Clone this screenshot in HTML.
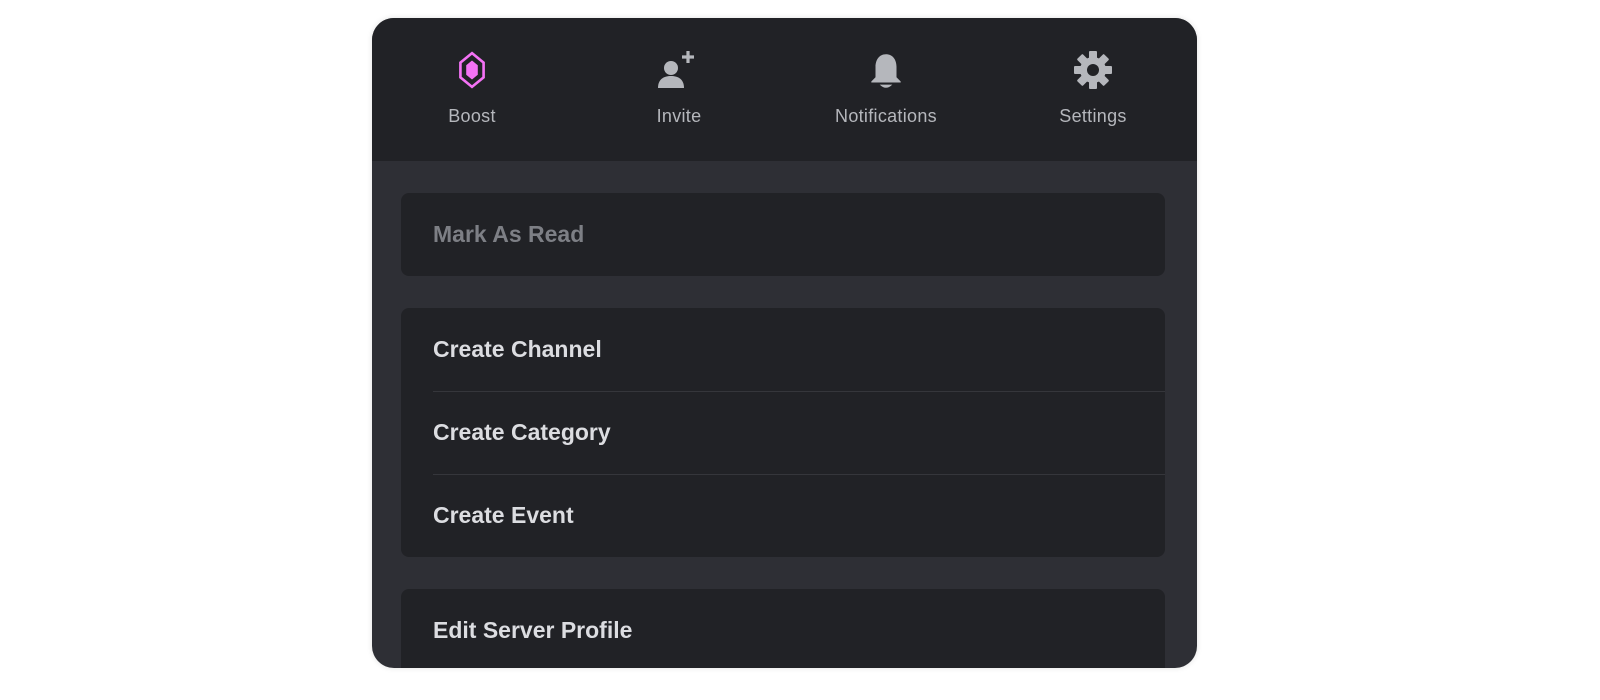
<!DOCTYPE html>
<html><head><meta charset="utf-8"><style>
*{margin:0;padding:0;box-sizing:border-box}
body{width:1600px;height:700px;background:#fff;font-family:"Liberation Sans",sans-serif;position:relative;overflow:hidden}
.card{position:absolute;left:372px;top:18px;width:825px;height:650px;border-radius:22px;background:#2e2f35;overflow:hidden;box-shadow:0 0 6px rgba(0,0,0,0.12)}
.head{position:absolute;left:0;top:0;width:825px;height:143px;background:#212226}
.tab{position:absolute;top:0;width:200px;text-align:center}
.tab svg{position:absolute;top:32px;left:50%;transform:translateX(-50%)}
.tab span{position:absolute;top:88px;left:0;width:200px;text-align:center;color:#b5b7bc;font-size:18px;letter-spacing:0.3px}
.panel{position:absolute;left:29px;width:764px;background:#212226;border-radius:8px}
.row{height:83px;line-height:83px;padding-left:32px;font-size:23px;font-weight:bold;color:#dcdde1;position:relative}
.row+.row:before{content:"";position:absolute;left:32px;right:0;top:0;height:1px;background:#35363b}
</style></head><body>
<div class="card">
 <div class="head">
  <div class="tab" style="left:0"><svg width="30" height="40" viewBox="0 0 28 38"><path d="M14 3 L25 12 L25 26 L14 35 L3 26 L3 12 Z" fill="none" stroke="#f472f5" stroke-width="2.5"/><path d="M14 10 L19.5 14.5 L19.5 23.5 L14 28 L8.5 23.5 L8.5 14.5 Z" fill="#f472f5"/></svg><span>Boost</span></div>
  <div class="tab" style="left:207px"><svg width="50" height="40" viewBox="0 0 50 40"><circle cx="17" cy="18" r="7" fill="#b5b7bc"/><path d="M4 38 C4 29 10 26 17 26 C24 26 30 29 30 38 Z" fill="#b5b7bc"/><path d="M28 7 H40 M34 1 V13" stroke="#b5b7bc" stroke-width="3.2"/></svg><span>Invite</span></div>
  <div class="tab" style="left:414px"><svg width="42" height="42" viewBox="0 0 40 40"><path d="M20 4 C13 4 10 10 10 16 V26 L6 30 V31 H34 V30 L30 26 V16 C30 10 27 4 20 4 Z" fill="#b5b7bc"/><path d="M14 33 Q20 39 26 33 Z" fill="#b5b7bc"/></svg><span>Notifications</span></div>
  <div class="tab" style="left:621px"><svg width="44" height="44" viewBox="0 0 44 44" style="top:30px"><g fill="#b5b7bc"><circle cx="22" cy="22" r="13"/><rect x="18" y="3" width="8" height="38" rx="1"/><rect x="18" y="3" width="8" height="38" rx="1" transform="rotate(45 22 22)"/><rect x="18" y="3" width="8" height="38" rx="1" transform="rotate(90 22 22)"/><rect x="18" y="3" width="8" height="38" rx="1" transform="rotate(135 22 22)"/></g><circle cx="22" cy="22" r="6" fill="#212226"/></svg><span>Settings</span></div>
 </div>
 <div class="panel" style="top:175px"><div class="row" style="color:#7d7f85">Mark As Read</div></div>
 <div class="panel" style="top:290px"><div class="row">Create Channel</div><div class="row">Create Category</div><div class="row">Create Event</div></div>
 <div class="panel" style="top:571px;height:120px"><div class="row">Edit Server Profile</div></div>
</div>
</body></html>
